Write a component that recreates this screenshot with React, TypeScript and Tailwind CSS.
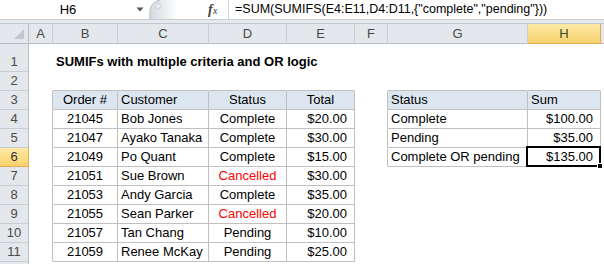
import React from "react";

type Cell = { t?: string; a?: "l" | "c" | "r"; red?: boolean; bold?: boolean; cur?: boolean };

const COLW = ["w-[24px]", "w-[65px]", "w-[91px]", "w-[78px]", "w-[68px]", "w-[33px]", "w-[140px]", "w-[73px]", "w-[10px]"];
const LETTERS = ["A", "B", "C", "D", "E", "F", "G", "H", ""];
const FORMULA = '=SUM(SUMIFS(E4:E11,D4:D11,{"complete","pending"}))';

const E: Cell = {};
const data: Cell[][] = [
  [E, { t: "SUMIFs with multiple criteria and OR logic", a: "l", bold: true }, E, E, E, E, E, E, E],
  [E, E, E, E, E, E, E, E, E],
  [E, { t: "Order #", a: "c" }, { t: "Customer", a: "l" }, { t: "Status", a: "c" }, { t: "Total", a: "c" }, E, { t: "Status", a: "l" }, { t: "Sum", a: "l" }, E],
  [E, { t: "21045", a: "c" }, { t: "Bob Jones", a: "l" }, { t: "Complete", a: "c" }, { t: "$20.00", a: "r" }, E, { t: "Complete", a: "l" }, { t: "$100.00", a: "r" }, E],
  [E, { t: "21047", a: "c" }, { t: "Ayako Tanaka", a: "l" }, { t: "Complete", a: "c" }, { t: "$30.00", a: "r" }, E, { t: "Pending", a: "l" }, { t: "$35.00", a: "r" }, E],
  [E, { t: "21049", a: "c" }, { t: "Po Quant", a: "l" }, { t: "Complete", a: "c" }, { t: "$15.00", a: "r" }, E, { t: "Complete OR pending", a: "l" }, { t: "$135.00", a: "r", cur: true }, E],
  [E, { t: "21051", a: "c" }, { t: "Sue Brown", a: "l" }, { t: "Cancelled", a: "c", red: true }, { t: "$30.00", a: "r" }, E, E, E, E],
  [E, { t: "21053", a: "c" }, { t: "Andy Garcia", a: "l" }, { t: "Complete", a: "c" }, { t: "$35.00", a: "r" }, E, E, E, E],
  [E, { t: "21055", a: "c" }, { t: "Sean Parker", a: "l" }, { t: "Cancelled", a: "c", red: true }, { t: "$20.00", a: "r" }, E, E, E, E],
  [E, { t: "21057", a: "c" }, { t: "Tan Chang", a: "l" }, { t: "Pending", a: "c" }, { t: "$10.00", a: "r" }, E, E, E, E],
  [E, { t: "21059", a: "c" }, { t: "Renee McKay", a: "l" }, { t: "Pending", a: "c" }, { t: "$25.00", a: "r" }, E, E, E, E],
  [E, E, E, E, E, E, E, E, E],
];

function inT(r: number, c: number) {
  const t1 = r >= 3 && r <= 11 && c >= 1 && c <= 4;
  const t2 = r >= 3 && r <= 6 && c >= 6 && c <= 7;
  return t1 || t2;
}

function FormulaBar() {
  return (
    <div className="flex h-[20px] bg-white border-b border-[#c9ced4]">
      <div className="w-[136px] flex items-center justify-center text-[13px] text-black leading-none">H6</div>
      <div className="w-[12px] flex items-center justify-start">
        <svg width="8" height="5" viewBox="0 0 8 5">
          <path d="M0.5 0.5 L7.5 0.5 L4 4.5 Z" fill="#555" />
        </svg>
      </div>
      <div className="w-[80px] relative">
        <svg width="80" height="19" viewBox="0 0 80 19" className="absolute left-0 top-0">
          <defs>
            <linearGradient id="g1" x1="0" x2="1" y1="0" y2="0">
              <stop offset="0" stopColor="#d4d8dd" />
              <stop offset="1" stopColor="#ffffff" />
            </linearGradient>
          </defs>
          <path d="M12 0 C3 2 1 8 2 19 L30 19 L30 0 Z" fill="url(#g1)" />
          <path d="M12 0 C3 2 1 8 2 19" fill="none" stroke="#b9bec4" strokeWidth="1" />
          <circle cx="10" cy="6" r="2.5" fill="#eef0f2" stroke="#c6cbd0" strokeWidth="0.8" />
          <text x="60" y="14" fontFamily="'Liberation Serif', serif" fontStyle="italic" fontWeight="bold" fontSize="14" fill="#444">f</text>
          <text x="65" y="14" fontFamily="'Liberation Serif', serif" fontStyle="italic" fontSize="10" fill="#444">x</text>
        </svg>
      </div>
      <div className="w-px bg-[#cfd3d8]" />
      <div className="flex-1 flex items-center pl-[6px] text-[12.5px] text-black whitespace-nowrap">
        {FORMULA}
      </div>
    </div>
  );
}

function ColHeaders() {
  return (
    <div className="flex h-[20px]">
      <div className="w-[29px] shrink-0 h-full bg-[#e4e7eb] border-r border-b border-[#b9bdc3] relative">
        <svg width="12" height="12" viewBox="0 0 12 12" className="absolute right-[3px] bottom-[3px]">
          <path d="M11 1 L11 11 L1 11 Z" fill="#c3c8ce" />
        </svg>
      </div>
      {LETTERS.map((l, i) => {
        const sel = l === "H";
        return (
          <div
            key={i}
            className={
              COLW[i] +
              " shrink-0 h-full flex items-center justify-center text-[13px] leading-none border-r border-b " +
              (sel
                ? "bg-linear-to-b from-[#fde9a4] to-[#f8d26c] border-[#e2ad55] text-[#2f4f2f]"
                : "bg-[#e4e7eb] border-r-[#c9cdd2] border-b-[#b9bdc3] text-[#4a4a4a]")
            }
          >
            {l}
          </div>
        );
      })}
    </div>
  );
}

function Row({ r, cells }: { r: number; cells: Cell[] }) {
  const h = r === 1 ? "h-[28px]" : "h-[19px]";
  const sel = r === 6;
  return (
    <div className={"flex " + h}>
      <div
        className={
          "w-[29px] shrink-0 h-full flex items-end justify-center leading-[18px] text-[13px] border-r border-b " +
          (sel
            ? "bg-linear-to-b from-[#fde9a4] to-[#f8d26c] border-[#e2ad55] text-[#333]"
            : "bg-[#e4e7eb] border-r-[#b9bdc3] border-b-[#c9cdd2] text-[#4a4a4a]")
        }
      >
        {r <= 11 ? r : ""}
      </div>
      {cells.map((c, i) => {
        const right = inT(r, i) || inT(r, i + 1);
        const bottom = inT(r, i) || inT(r + 1, i);
        const head = r === 3 && inT(r, i);
        const align =
          c.a === "l" ? "justify-start pl-[3px]" : c.a === "r" ? "justify-end pr-[7px]" : "justify-center";
        return (
          <div
            key={i}
            className={
              COLW[i] +
              " shrink-0 h-full flex items-end relative whitespace-nowrap leading-[18px] text-[13px] border-r border-b " +
              align +
              " " +
              (right ? "border-r-[#c0c0c0]" : "border-r-transparent") +
              " " +
              (bottom ? "border-b-[#c0c0c0]" : "border-b-transparent") +
              " " +
              (head ? "bg-[#dce6f1]" : "") +
              " " +
              (c.red ? "text-[#ff0000]" : "text-black") +
              " " +
              (c.bold ? "font-bold" : "")
            }
          >
            {c.t ? <span className="relative z-10">{c.t}</span> : null}
            {c.cur ? (
              <div className="absolute left-[-2px] top-[-2px] w-[75px] h-[21px] border-2 border-black z-20">
                <div className="absolute right-[-4px] bottom-[-4px] w-[6px] h-[6px] bg-black border border-white" />
              </div>
            ) : null}
          </div>
        );
      })}
    </div>
  );
}

export default function App() {
  return (
    <div className="w-[604px] h-[264px] overflow-hidden bg-white font-['Liberation_Sans',Arial,sans-serif]">
      <FormulaBar />
      <div className="h-[4px] bg-[#e6e9ed] border-b border-[#c2c7cd]" />
      <ColHeaders />
      {data.map((cells, i) => (
        <Row key={i} r={i + 1} cells={cells} />
      ))}
    </div>
  );
}
